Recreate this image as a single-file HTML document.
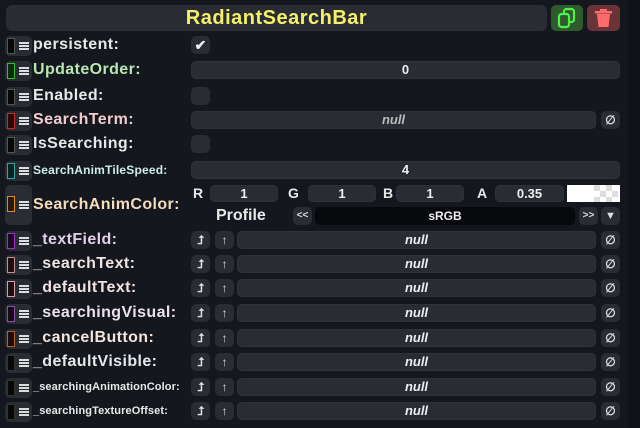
<!DOCTYPE html>
<html><head><style>
*{margin:0;padding:0;box-sizing:border-box}
body{width:640px;height:428px;background:#14171e;font-family:"Liberation Sans",sans-serif;font-weight:bold;position:relative;overflow:hidden;color:#e8e8e8}
.a{position:absolute}
.strip{left:628px;top:0;width:12px;height:428px;background:#0f1218}
.f{position:absolute;background:#2a2c33;border-radius:5px;height:18px;text-align:center;font-size:13px;line-height:18px;color:#eee;box-shadow:inset 0 0 0 1px #30323a}
.b{position:absolute;background:#2a2c33;border-radius:5px;height:18px;width:19px;text-align:center;font-size:12px;line-height:18px;color:#ddd}
.lab{position:absolute;left:33px;font-size:16px;line-height:18px;letter-spacing:0.4px}
.ic{position:absolute;left:5px;width:27px;height:20px;background:#2a2c33;border-radius:5px}
.sw{position:absolute;left:2px;top:2px;width:8px;height:16px;background:#080808;border:1.5px solid #555}
.hm{position:absolute;left:14px;top:6px;width:10px;height:8px;border-top:2px solid #ddd;border-bottom:2px solid #ddd}
.hm:after{content:"";position:absolute;left:0;top:1px;width:10px;height:2px;background:#ddd}
i{font-style:italic}
</style></head><body>
<div class="a strip"></div>
<div class="a" style="left:6px;top:5px;width:541px;height:26px;background:#2a2c33;border-radius:6px;text-align:center;font-size:20px;letter-spacing:0.5px;line-height:27px;color:#f5f06a">RadiantSearchBar</div>
<div class="a" style="left:551px;top:5px;width:32px;height:26px;background:#2f5a2d;border-radius:5px">
<svg width="32" height="26"><rect x="13" y="4" width="10" height="13" rx="2.5" fill="none" stroke="#4ef04a" stroke-width="2.2"/><rect x="8" y="9" width="10" height="13" rx="2.5" fill="#2f5a2d" stroke="#4ef04a" stroke-width="2.2"/></svg></div>
<div class="a" style="left:587px;top:5px;width:33px;height:26px;background:#6a3338;border-radius:5px">
<svg width="33" height="26"><rect x="8" y="6" width="17" height="2.5" fill="#ff6b6b"/><rect x="13" y="4" width="7" height="2" fill="#ff6b6b"/><path d="M10 9h13l-1.5 13h-10z" fill="#ff6b6b"/></svg></div>

<div class="ic" style="top:36px"><div class="sw"></div><div class="hm"></div></div><div class="lab" style="top:36px">persistent:</div>
<div class="b" style="left:191px;top:36px;color:#eee;font-size:14px">✔</div>

<div class="ic" style="top:61px"><div class="sw" style="border-color:#2ec02e;background:#0c2a0c"></div><div class="hm"></div></div><div class="lab" style="top:61px;color:#b9e6b2">UpdateOrder:</div>
<div class="f" style="left:191px;top:61px;width:429px">0</div>

<div class="ic" style="top:87px"><div class="sw"></div><div class="hm"></div></div><div class="lab" style="top:87px">Enabled:</div>
<div class="b" style="left:191px;top:87px"></div>

<div class="ic" style="top:111px"><div class="sw" style="border-color:#c82828;background:#2a0808"></div><div class="hm"></div></div><div class="lab" style="top:111px;color:#f2cccc">SearchTerm:</div>
<div class="f" style="left:191px;top:111px;width:405px;color:#bbb"><i>null</i></div><div class="b" style="left:601px;top:111px">∅</div>

<div class="ic" style="top:135px"><div class="sw"></div><div class="hm"></div></div><div class="lab" style="top:135px">IsSearching:</div>
<div class="b" style="left:191px;top:135px"></div>

<div class="ic" style="top:161px"><div class="sw" style="border-color:#2aa8a0;background:#082220"></div><div class="hm"></div></div><div class="lab" style="top:161px;font-size:12px;letter-spacing:0.2px;color:#cdeceb">SearchAnimTileSpeed:</div>
<div class="f" style="left:191px;top:161px;width:429px">4</div>

<div class="ic" style="top:185px;height:40px"><div class="sw" style="top:11px;border-color:#e08a10;background:#2a1808"></div><div class="hm" style="top:16px"></div></div><div class="lab" style="top:196px;color:#f4dcbc">SearchAnimColor:</div>
<div class="a" style="left:193px;top:185px;font-size:14px;line-height:17px">R</div><div class="f" style="left:210px;top:185px;width:68px;height:17px;line-height:17px">1</div>
<div class="a" style="left:288px;top:185px;font-size:14px;line-height:17px">G</div><div class="f" style="left:308px;top:185px;width:68px;height:17px;line-height:17px">1</div>
<div class="a" style="left:383px;top:185px;font-size:14px;line-height:17px">B</div><div class="f" style="left:396px;top:185px;width:68px;height:17px;line-height:17px">1</div>
<div class="a" style="left:477px;top:185px;font-size:14px;line-height:17px">A</div><div class="f" style="left:495px;top:185px;width:69px;height:17px;line-height:17px">0.35</div>
<div class="a" style="left:567px;top:185px;width:53px;height:17px;background:#fff"><svg width="53" height="17"><g fill="#ddd"><rect x="27" y="0" width="6" height="6"/><rect x="39" y="0" width="6" height="6"/><rect x="33" y="6" width="6" height="6"/><rect x="45" y="6" width="6" height="6"/><rect x="27" y="12" width="6" height="5"/><rect x="39" y="12" width="6" height="5"/></g></svg></div>
<div class="a" style="left:216px;top:207px;font-size:16px;line-height:18px">Profile</div>
<div class="b" style="left:293px;top:207px;font-size:10px">&lt;&lt;</div>
<div class="f" style="left:315px;top:207px;width:260px;background:#08090c;box-shadow:none;font-size:12px">sRGB</div>
<div class="b" style="left:579px;top:207px;font-size:10px">&gt;&gt;</div>
<div class="b" style="left:601px;top:207px;font-size:11px">▼</div>

<div class="ic" style="top:231px"><div class="sw" style="border-color:#a030c0;background:#1a0822"></div><div class="hm"></div></div><div class="lab" style="top:231px;color:#e2d0ea">_textField:</div>
<div class="ic" style="top:255px"><div class="sw" style="border-color:#c09090;background:#1e0e0e"></div><div class="hm"></div></div><div class="lab" style="top:255px;color:#f2e2e2">_searchText:</div>
<div class="ic" style="top:279px"><div class="sw" style="border-color:#d8a0a8;background:#1e0e10"></div><div class="hm"></div></div><div class="lab" style="top:279px;color:#f2e2e2">_defaultText:</div>
<div class="ic" style="top:304px"><div class="sw" style="border-color:#8a50a0;background:#160a1a"></div><div class="hm"></div></div><div class="lab" style="top:304px;color:#ece2ee">_searchingVisual:</div>
<div class="ic" style="top:329px"><div class="sw" style="border-color:#b06030;background:#200e06"></div><div class="hm"></div></div><div class="lab" style="top:329px;color:#f2e4da">_cancelButton:</div>
<div class="ic" style="top:353px"><div class="sw" style="border-color:#333"></div><div class="hm"></div></div><div class="lab" style="top:353px">_defaultVisible:</div>
<div class="ic" style="top:378px"><div class="sw" style="border-color:#333"></div><div class="hm"></div></div><div class="lab" style="top:378px;font-size:11px;letter-spacing:0.1px">_searchingAnimationColor:</div>
<div class="ic" style="top:402px"><div class="sw" style="border-color:#333"></div><div class="hm"></div></div><div class="lab" style="top:402px;font-size:11px;letter-spacing:0.1px">_searchingTextureOffset:</div>

<div class="b" style="left:191px;top:231px">⮥</div><div class="b" style="left:215px;top:231px">↑</div><div class="f" style="left:237px;top:231px;width:359px"><i>null</i></div><div class="b" style="left:601px;top:231px">∅</div>
<div class="b" style="left:191px;top:255px">⮥</div><div class="b" style="left:215px;top:255px">↑</div><div class="f" style="left:237px;top:255px;width:359px"><i>null</i></div><div class="b" style="left:601px;top:255px">∅</div>
<div class="b" style="left:191px;top:279px">⮥</div><div class="b" style="left:215px;top:279px">↑</div><div class="f" style="left:237px;top:279px;width:359px"><i>null</i></div><div class="b" style="left:601px;top:279px">∅</div>
<div class="b" style="left:191px;top:304px">⮥</div><div class="b" style="left:215px;top:304px">↑</div><div class="f" style="left:237px;top:304px;width:359px"><i>null</i></div><div class="b" style="left:601px;top:304px">∅</div>
<div class="b" style="left:191px;top:329px">⮥</div><div class="b" style="left:215px;top:329px">↑</div><div class="f" style="left:237px;top:329px;width:359px"><i>null</i></div><div class="b" style="left:601px;top:329px">∅</div>
<div class="b" style="left:191px;top:353px">⮥</div><div class="b" style="left:215px;top:353px">↑</div><div class="f" style="left:237px;top:353px;width:359px"><i>null</i></div><div class="b" style="left:601px;top:353px">∅</div>
<div class="b" style="left:191px;top:378px">⮥</div><div class="b" style="left:215px;top:378px">↑</div><div class="f" style="left:237px;top:378px;width:359px"><i>null</i></div><div class="b" style="left:601px;top:378px">∅</div>
<div class="b" style="left:191px;top:402px">⮥</div><div class="b" style="left:215px;top:402px">↑</div><div class="f" style="left:237px;top:402px;width:359px"><i>null</i></div><div class="b" style="left:601px;top:402px">∅</div>
</body></html>
